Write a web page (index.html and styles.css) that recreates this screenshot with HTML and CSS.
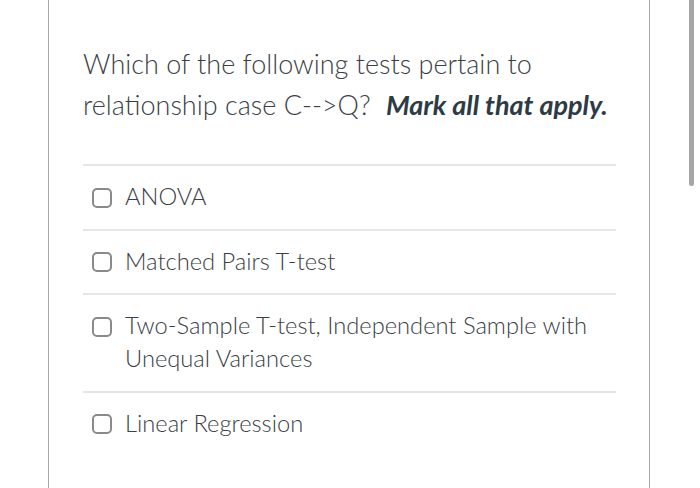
FILE: index.html
```html
<!DOCTYPE html>
<html>
<head>
<meta charset="utf-8">
<link rel="stylesheet" href="styles.css">
</head>
<body>
<div class="page">
  <div class="card">
    <p class="question">Which of the following tests pertain to relationship case C--&gt;Q? <strong class="emph">Mark all that apply.</strong></p>
    <div class="answers">
      <div class="answer"><span class="box"></span><span class="label">ANOVA</span></div>
      <div class="answer"><span class="box"></span><span class="label">Matched Pairs T-test</span></div>
      <div class="answer"><span class="box"></span><span class="label">Two-Sample T-test, Independent Sample with Unequal Variances</span></div>
      <div class="answer"><span class="box"></span><span class="label">Linear Regression</span></div>
    </div>
  </div>
  <div class="scrollbar"></div>
</div>
</body>
</html>
```

FILE: styles.css
```css
html, body {
  margin: 0;
  padding: 0;
  background: #ffffff;
  overflow: hidden;
}
.page {
  position: relative;
  width: 700px;
  height: 488px;
  font-family: "Lato", "Liberation Sans", sans-serif;
}
.card {
  margin-left: 48px;
  width: 602px;
  height: 488px;
  box-sizing: border-box;
  border-left: 1.5px solid #a9a9a9;
  border-right: 1.5px solid #a9a9a9;
  padding: 43px 33px 0 34px;
}
.question {
  margin: 0;
  font-size: 27px;
  font-weight: 300;
  line-height: 41px;
  color: #3a4146;
  width: 540px;
}
.emph {
  font-weight: 700;
  font-style: italic;
  color: #2d3b45;
  margin-left: 8px;
}
.answers {
  margin-top: 39px;
  border-top: 2px solid #e6e6e6;
}
.answer {
  display: flex;
  align-items: flex-start;
  padding: 14px 0 15.5px 9px;
  border-bottom: 2px solid #e6e6e6;
}
.answer:last-child {
  border-bottom: none;
}
.box {
  flex: none;
  width: 16px;
  height: 16px;
  border: 2.5px solid #8a8a8a;
  border-radius: 5px;
  margin-top: 7.5px;
  margin-right: 13px;
}
.label {
  font-size: 23.7px;
  font-weight: 300;
  line-height: 33px;
  color: #3a4146;
  width: 480px;
}
.scrollbar {
  position: absolute;
  left: 689px;
  top: -10px;
  width: 5px;
  height: 196px;
  border-radius: 3px;
  background: #a6a6a6;
}
```
